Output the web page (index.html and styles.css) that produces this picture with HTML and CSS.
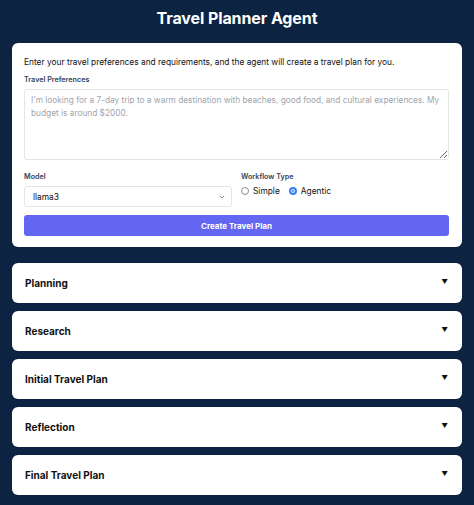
FILE: index.html
```html
<!DOCTYPE html>
<html lang="en">
<head>
<meta charset="utf-8">
<title>Travel Planner Agent</title>
<link rel="stylesheet" href="styles.css">
</head>
<body>
<div class="page">
  <h1 class="title">Travel Planner Agent</h1>
  <div class="card form-card">
    <p class="intro">Enter your travel preferences and requirements, and the agent will create a travel plan for you.</p>
    <label class="label" for="prefs">Travel Preferences</label>
    <textarea id="prefs" class="textarea" placeholder="I'm looking for a 7-day trip to a warm destination with beaches, good food, and cultural experiences. My budget is around $2000."></textarea>
    <div class="row">
      <div class="col">
        <label class="label" for="model">Model</label>
        <div class="select">
          <span>llama3</span>
          <svg class="chev" width="6" height="4" viewBox="0 0 6 4"><path d="M0.8 0.8 L3 3 L5.2 0.8" fill="none" stroke="#666" stroke-width="0.8"/></svg>
        </div>
      </div>
      <div class="col">
        <span class="label">Workflow Type</span>
        <div class="radios">
          <span class="radio-item"><span class="radio"></span>Simple</span>
          <span class="radio-item"><span class="radio checked"></span>Agentic</span>
        </div>
      </div>
    </div>
    <button class="btn">Create Travel Plan</button>
  </div>
  <div class="sections">
    <div class="card section"><span>Planning</span><span class="arrow">▼</span></div>
    <div class="card section"><span>Research</span><span class="arrow">▼</span></div>
    <div class="card section"><span>Initial Travel Plan</span><span class="arrow">▼</span></div>
    <div class="card section"><span>Reflection</span><span class="arrow">▼</span></div>
    <div class="card section"><span>Final Travel Plan</span><span class="arrow">▼</span></div>
  </div>
</div>
</body>
</html>
```
FILE: styles.css
```css
html, body {
  margin: 0;
  padding: 0;
  background: #0c2442;
  font-family: Inter, "Noto Sans", sans-serif;
}
.page {
  padding: 0 12px;
}
.title {
  margin: 0;
  height: 43px;
  line-height: 36px;
  text-align: center;
  color: #fff;
  font-size: 16px;
  font-weight: 700;
  letter-spacing: -0.1px;
}
.card {
  background: #fff;
  border-radius: 6px;
}
.form-card {
  padding: 13px 13px 11px 12px;
  display: flex;
  flex-direction: column;
}
.intro {
  margin: 0 0 7px;
  font-size: 8.35px;
  line-height: 12px;
  color: #111;
}
.label {
  display: block;
  font-size: 7.2px;
  font-weight: 600;
  color: #374151;
  line-height: 10px;
  margin-bottom: 4px;
}
.textarea {
  box-sizing: border-box;
  height: 71px;
  width: 100%;
  border: 1px solid #e3e5e8;
  border-radius: 3px;
  padding: 4px 6px;
  font-family: inherit;
  font-size: 8.3px;
  line-height: 13px;
  resize: vertical;
  margin: 0 0 12px;
  color: #111;
}
.textarea::placeholder {
  color: #a0a4ab;
}
.row {
  display: flex;
  gap: 9px;
  margin-bottom: 8px;
}
.col {
  flex: 1;
}
.select {
  box-sizing: border-box;
  height: 21px;
  border: 1px solid #e3e5e8;
  border-radius: 3px;
  padding: 0 6px 0 8px;
  display: flex;
  align-items: center;
  justify-content: space-between;
  font-size: 8.4px;
  color: #111;
}
.radios {
  display: flex;
  gap: 9px;
  font-size: 8.4px;
  color: #111;
}
.radio-item {
  display: flex;
  align-items: center;
  gap: 4px;
}
.radio {
  box-sizing: border-box;
  width: 8px;
  height: 8px;
  border-radius: 50%;
  border: 1px solid #8a8f96;
  background: #fff;
}
.radio.checked {
  border: 2px solid #3b82f6;
  background: #3b82f6;
  box-shadow: inset 0 0 0 1px #fff;
}
.btn {
  height: 21px;
  border: none;
  border-radius: 3px;
  background: #6366f1;
  color: #fff;
  font-family: inherit;
  font-size: 8px;
  font-weight: 700;
  padding: 0;
}
.sections {
  display: flex;
  flex-direction: column;
  gap: 8px;
  margin-top: 16px;
}
.section {
  height: 40px;
  box-sizing: border-box;
  padding: 0 14px 0 13px;
  display: flex;
  align-items: center;
  justify-content: space-between;
  font-size: 10px;
  font-weight: 700;
  color: #111;
}
.arrow {
  font-size: 6.5px;
  margin-top: -2px;
}
```
